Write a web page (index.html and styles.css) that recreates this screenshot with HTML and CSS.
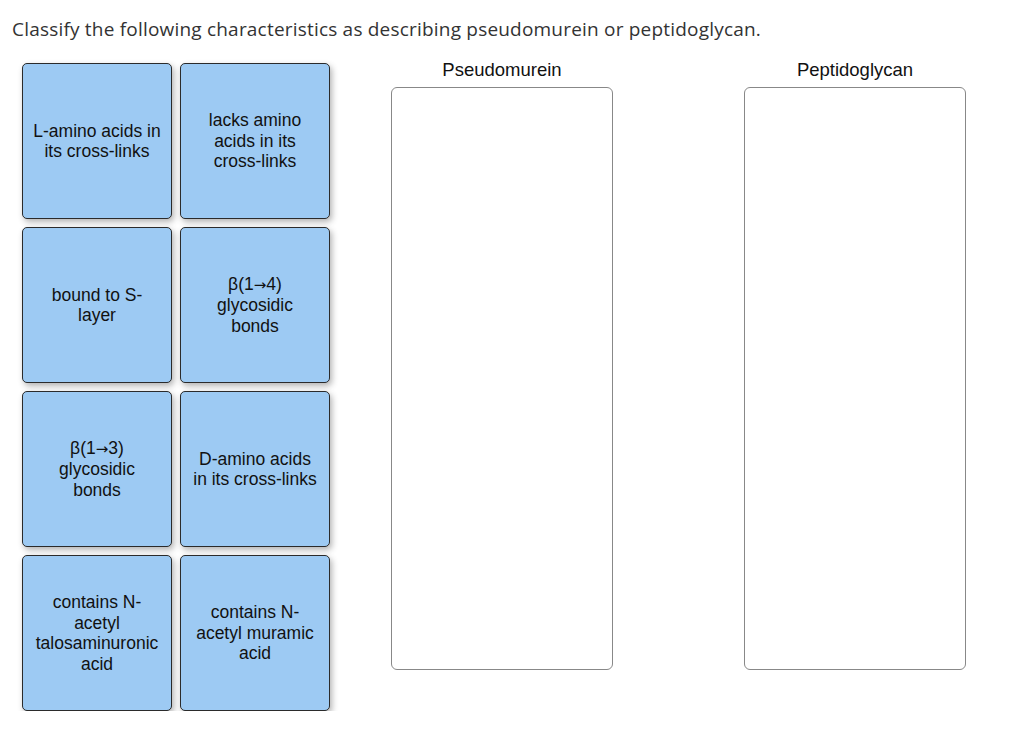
FILE: index.html
```html
<!DOCTYPE html>
<html lang="en">
<head>
  <meta charset="UTF-8">
  <title>Classify</title>
  <link rel="stylesheet" href="styles.css">
</head>
<body>
  <p class="prompt">Classify the following characteristics as describing pseudomurein or peptidoglycan.</p>

  <div class="workspace">
    <div class="tiles">
      <div class="tile"><span>L-amino acids in its cross-links</span></div>
      <div class="tile"><span>lacks amino<br>acids in its<br>cross-links</span></div>
      <div class="tile"><span>bound to S-<br>layer</span></div>
      <div class="tile"><span>β(1<span class="arrow">→</span>4)<br>glycosidic<br>bonds</span></div>
      <div class="tile"><span>β(1<span class="arrow">→</span>3)<br>glycosidic<br>bonds</span></div>
      <div class="tile"><span>D-amino acids<br>in its cross-links</span></div>
      <div class="tile"><span>contains N-<br>acetyl<br>talosaminuronic<br>acid</span></div>
      <div class="tile"><span>contains N-<br>acetyl muramic<br>acid</span></div>
    </div>

    <div class="bins">
      <div class="bin">
        <h3>Pseudomurein</h3>
        <div class="binBox"></div>
      </div>
      <div class="bin">
        <h3>Peptidoglycan</h3>
        <div class="binBox"></div>
      </div>
    </div>
  </div>
</body>
</html>
```

FILE: styles.css
```css
body {
  margin: 0;
  background: #fff;
  color: #222;
}

.prompt {
  font-family: "Open Sans", sans-serif;
  font-size: 19px;
  letter-spacing: 0.2px;
  color: #333;
  margin: 0;
  padding: 17px 0 0 12px;
  line-height: 24px;
}

.workspace {
  display: flex;
  align-items: flex-start;
  margin-top: 22px;
  padding-left: 22px;
}

.tiles {
  display: grid;
  grid-template-columns: 150px 150px;
  grid-auto-rows: 156px;
  gap: 8px;
}

.tile {
  display: flex;
  align-items: center;
  justify-content: center;
  text-align: center;
  padding: 0 4px;
  background: #9dcaf3;
  border: 1px solid #2b2b2b;
  border-radius: 5px;
  box-shadow: 2px 3px 6px rgba(0, 0, 0, 0.3);
  font-family: "Liberation Sans", Arial, sans-serif;
  font-size: 17.5px;
  line-height: 20.5px;
  color: #111;
}

.arrow {
  font-family: "DejaVu Sans", sans-serif;
  font-size: 15px;
}

.bins {
  display: flex;
  gap: 131px;
  margin-left: 61px;
}

.bin {
  width: 222px;
}

.bin h3 {
  margin: 0 0 10px;
  font-family: "Liberation Sans", Arial, sans-serif;
  font-size: 18.5px;
  font-weight: normal;
  line-height: 14px;
  text-align: center;
  color: #111;
}

.binBox {
  height: 581px;
  border: 1px solid #888;
  border-radius: 6px;
  background: #fff;
}
```
